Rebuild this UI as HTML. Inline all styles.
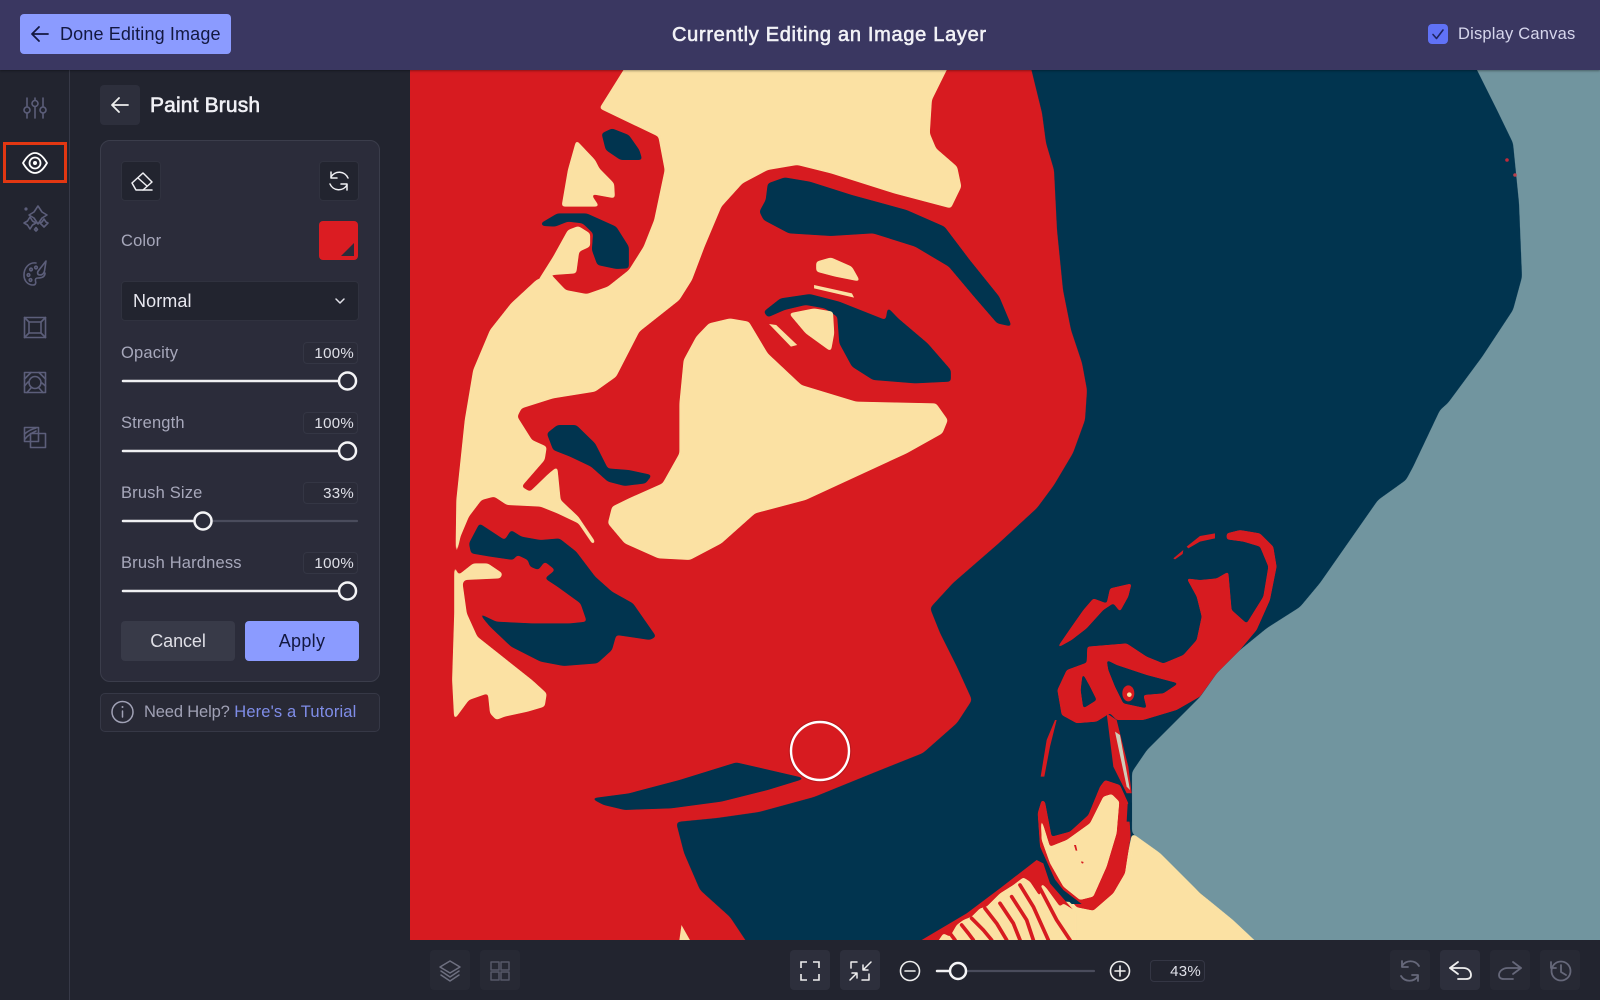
<!DOCTYPE html>
<html><head><meta charset="utf-8"><title>Paint Brush</title>
<style>
*{box-sizing:border-box;margin:0;padding:0}
html,body{width:1600px;height:1000px;overflow:hidden;background:#22242f;font-family:"Liberation Sans",sans-serif}
.a{position:absolute}
.t{position:absolute;white-space:nowrap;line-height:24px;height:24px}
.lab{font-size:16.5px;color:#a7a8bb;left:121px;letter-spacing:.17px}
.val{position:absolute;left:303px;width:55px;height:22px;border:1px solid #343644;border-radius:4px;background:#2a2b38;color:#dfe0e8;font-size:15px;line-height:21px;text-align:right;padding-right:3px;letter-spacing:.3px}
.btn{position:absolute;border-radius:4px}
#art{position:absolute;left:0;top:0;width:1600px;height:1000px}
</style></head>
<body>
<svg id="art" viewBox="0 0 1600 1000" xmlns="http://www.w3.org/2000/svg">
<defs>
<filter id="sA" x="-5%" y="-5%" width="110%" height="110%" color-interpolation-filters="sRGB"><feGaussianBlur stdDeviation="2.2"/><feComponentTransfer><feFuncA type="linear" slope="9" intercept="-4"/></feComponentTransfer></filter>
<filter id="s7" x="-10%" y="-10%" width="120%" height="120%" color-interpolation-filters="sRGB"><feGaussianBlur stdDeviation="3.8 4.8"/><feComponentTransfer><feFuncA type="linear" slope="9" intercept="-4"/></feComponentTransfer></filter>
<filter id="s9" x="-10%" y="-10%" width="120%" height="120%" color-interpolation-filters="sRGB"><feGaussianBlur stdDeviation="3.6"/><feComponentTransfer><feFuncA type="linear" slope="9" intercept="-4"/></feComponentTransfer></filter>
</defs>
<clipPath id="cv"><rect x="410" y="70" width="1190" height="870"/></clipPath>
<g clip-path="url(#cv)">
<rect x="410" y="70" width="1190" height="870" fill="#d71b20"/>
<rect x="1090" y="70" width="510" height="870" fill="#71959f"/>
<path filter="url(#sA)" fill="#01344f" d="M1029,60L1042,113L1046,143L1054,170L1057,230L1063,290L1071,330L1082,363L1087,390L1085,420L1073,453L1054,485L1037,508L999,543L953,583L930,608L940,633L957,667L972,700L957,723L923,753L873,773L814,797L759,812L717,818L676,822L684,853L700,890L730,917L752,950L1265,950L1132,833L1132,772L1147,750L1167,730L1200,697L1217,673L1240,650L1267,628L1300,607L1320,583L1378,500L1406,480L1413,467L1440,410L1448,403L1482,357L1513,310L1522,277L1519,203L1513,143L1497,110L1472,60Z"/>
<!-- neck -->
<path filter="url(#sA)" fill="#fbe1a3" d="M1132,833L1160,853L1200,893L1233,920L1265,950L1050,950L1050,900L1100,905L1123,877Z"/>
<!-- collar -->
<g transform="translate(900,840) scale(.3333)">
<path fill="#d71b20" d="M65,300L200,220L300,145L410,60L430,70L450,130L520,210L520,300Z"/>
<path filter="url(#s9)" fill="#fbe1a3" d="M110,310L130,280L150,290L170,255L190,240L215,230L240,205L260,200L300,160L340,135L370,112L390,125L420,170L425,130L440,145L480,200L490,190L530,215L530,310Z"/>
<g fill="none" stroke="#d71b20" stroke-width="11" stroke-linecap="round" stroke-linejoin="round">
<path d="M360,135L400,200L445,300"/><path d="M335,170L380,240L400,300"/><path d="M300,190L340,250L360,300"/><path d="M255,205L290,250L320,300"/><path d="M215,235L250,270L275,300"/><path d="M185,255L205,280L220,300"/><path d="M150,280L165,300"/><path d="M415,135L470,240L510,300"/>
</g>
</g>
<!-- earring / ear in z9 coords -->
<g transform="translate(1000,500) scale(.3333)">
<path filter="url(#s9)" fill="#d71b20" d="M680,100L720,90L780,100L820,140L830,200L810,300L770,390L720,450L650,520L600,590L530,630L430,660L350,660L330,640L290,665L230,670L185,645L172,570L200,510L260,488L262,440L380,430L440,470L490,490L550,465L590,420L605,350L590,290L560,235L600,240L650,235L685,215L695,330L740,370L790,290L805,200L780,140L730,125L680,118Z"/>
<path filter="url(#s9)" fill="#01344f" d="M320,480L350,495L440,525L535,550L490,580L430,585L440,625L370,610L345,560L325,510Z"/>
<path filter="url(#s9)" fill="#01344f" d="M248,520L270,560L290,600L250,625L242,570Z"/>
<ellipse cx="385" cy="580" rx="18" ry="24" fill="#d71b20"/><circle cx="388" cy="584" r="7" fill="#fbe1a3"/>
<path fill="#d71b20" d="M520,175L550,150L548,162L525,178ZM560,140L600,108L645,100L645,115L600,125L565,145Z"/>
<path filter="url(#s9)" fill="#d71b20" d="M170,445L215,380L250,330L280,295L320,310L330,265L395,250L385,290L360,335L340,310L310,330L260,385L215,420Z"/>
<path fill="#d71b20" d="M165,660L140,720L122,830L133,830L150,740L170,660Z"/>
<path filter="url(#s9)" fill="#d71b20" d="M125,900L135,905L155,1010L210,995L265,945L300,860L315,840L360,855L385,910L392,1010L375,1120L340,1180L280,1232L230,1222L170,1150L120,1040L113,940Z"/>
<path fill="#d71b20" d="M320,640L350,660L385,800L395,880L380,880L340,800Z"/>
<path fill="#cfcdb8" d="M345,695L360,705L390,870L380,860Z"/>
<path fill="#01344f" d="M383,912L396,908L396,965L380,965Z"/>
<path filter="url(#s9)" fill="#fbe1a3" d="M122,950L150,1040L200,1020L270,970L310,890L335,882L358,905L350,1000L320,1100L280,1190L240,1200L190,1160L150,1090L125,1020Z"/>
<path fill="#01344f" d="M150,1120L190,1170L245,1212L215,1212L170,1170Z"/>
<path fill="#d71b20" d="M222,1035L228,1035L232,1052L227,1052ZM244,1084L251,1086L249,1091L244,1089Z"/>
</g>
<!-- specks -->
<circle cx="1507" cy="160" r="1.8" fill="#c22a3a"/><circle cx="1515" cy="175" r="1.8" fill="#b8404c"/>
<!-- face in z7 coords -->
<g transform="translate(410,70) scale(.4209,.33333)">
<path filter="url(#s7)" fill="#fbe1a3" d="M522,-30L1287,-30L1240,90L1235,190L1250,235L1300,290L1310,350L1285,415L1150,370L1000,310L920,285L850,300L790,340L740,410L700,530L670,630L640,690L545,785L490,920L440,965L340,985L265,1015L255,1040L290,1110L325,1130L320,1170L265,1250L285,1265L330,1210L350,1190L358,1290L400,1340L440,1415L435,1425L400,1360L350,1330L310,1310L230,1305L200,1280L170,1290L140,1340L120,1400L108,1470L110,1290L130,1050L150,900L190,780L240,700L300,630L335,610L340,620L370,660L420,672L470,650L520,600L555,530L580,450L605,300L590,200L450,115Z"/>
<path filter="url(#s7)" fill="#fbe1a3" d="M395,210L440,270L450,295L485,340L487,385L430,372L450,410L360,410L375,300Z"/>
<path filter="url(#s7)" fill="#fbe1a3" d="M300,640L340,560L375,480L400,468L428,490L428,530L402,545L395,610L340,615Z"/>
<path filter="url(#s7)" fill="#01344f" d="M455,190L480,175L520,195L545,240L552,270L500,270L465,240Z"/>
<path filter="url(#s7)" fill="#01344f" d="M310,460L350,430L420,430L490,470L520,530L520,595L490,597L445,585L432,540L435,490L410,460L375,455L345,470L315,468Z"/>
<path filter="url(#s7)" fill="#01344f" d="M850,340L890,322L950,335L1050,375L1180,420L1270,470L1330,570L1400,680L1430,770L1395,760L1340,680L1280,590L1200,530L1100,490L1000,498L900,490L840,450L830,425L845,390Z"/>
<path filter="url(#s7)" fill="#fbe1a3" d="M965,575L1000,562L1050,590L1070,635L1010,620L965,605Z"/>
<path fill="#fbe1a3" d="M960,645L1050,670L1055,683L960,655Z"/>
<path filter="url(#s7)" fill="#01344f" d="M840,725L880,685L950,672L1020,695L1130,750L1135,712L1160,745L1230,820L1285,900L1285,935L1200,940L1100,930L1050,890L1020,820L1015,740L985,715L940,705L890,720L850,742Z"/>
<path filter="url(#s7)" fill="#fbe1a3" d="M900,730L960,715L1005,725L1008,790L1000,845L940,790Z"/>
<path fill="#fbe1a3" d="M853,762L870,765L920,825L905,830Z"/>
<path filter="url(#s7)" fill="#fbe1a3" d="M710,760L760,745L805,755L850,850L930,945L1060,995L1250,1000L1278,1050L1265,1090L1180,1150L940,1290L820,1330L740,1420L665,1470L590,1465L510,1420L470,1360L480,1310L520,1285L600,1240L640,1150L640,1000L650,870L680,800Z"/>
<path filter="url(#s7)" fill="#01344f" d="M325,1090L350,1065L395,1065L440,1120L470,1195L520,1200L575,1215L560,1240L510,1248L470,1235L430,1190L380,1160L340,1140Z"/>
<path filter="url(#s7)" fill="#fbe1a3" d="M115,1515L150,1480L185,1480L220,1510L215,1525L130,1530L125,1540L135,1630L160,1700L220,1760L290,1830L325,1870L320,1910L280,1925L225,1940L205,1950L190,1930L185,1870L140,1890L105,1950L100,1830L105,1630L105,1480Z"/>
<path filter="url(#s7)" fill="#01344f" d="M165,1360L225,1410L240,1380L265,1400L310,1410L355,1405L395,1445L440,1520L480,1565L530,1600L585,1700L570,1710L490,1695L480,1740L445,1780L365,1788L310,1775L240,1730L190,1670L160,1625L180,1640L205,1655L290,1660L380,1660L420,1655L405,1600L350,1550L320,1525L345,1500L320,1475L305,1500L285,1490L280,1470L255,1455L245,1470L190,1460L145,1450L140,1420Z"/>
<path filter="url(#s7)" fill="#01344f" d="M430,2185L520,2170L640,2130L775,2077L940,2125L850,2160L740,2195L620,2215L510,2220L460,2205Z"/>
<path fill="#fbe1a3" d="M640,2610L645,2565L665,2610Z"/>
</g>
<circle cx="820" cy="751" r="29" fill="none" stroke="#fff" stroke-width="2.4"/>
<circle cx="820" cy="751" r="30.800" fill="none" stroke="#000" stroke-opacity=".15" stroke-width="1"/>
</g>

<!-- sidebar divider -->
<rect x="69" y="70" width="1" height="930" fill="#373947"/>
</svg>

<!-- Header -->
<div class="a" style="left:0;top:0;width:1600px;height:70px;background:#3a3761;box-shadow:0 1px 2px rgba(0,0,0,.35)"></div>
<div class="btn" style="left:20px;top:14px;width:211px;height:40px;background:#8b9bff"></div>
<div class="t" style="left:60px;top:22px;font-size:18px;color:#131840;letter-spacing:.14px">Done Editing Image</div>
<div class="t" style="left:672px;top:23px;font-size:20px;color:#f1f1f6;letter-spacing:.7px;-webkit-text-stroke:.6px #f1f1f6">Currently Editing an Image Layer</div>
<div class="a" style="left:1428px;top:24px;width:20px;height:20px;border-radius:4px;background:#6072f6"></div>
<div class="t" style="left:1458px;top:22px;font-size:16.5px;color:#d6d6ec;letter-spacing:.2px">Display Canvas</div>

<!-- Left panel -->
<div class="btn" style="left:100px;top:85px;width:40px;height:40px;background:#2d2f3c"></div>
<div class="t" style="left:150px;top:94px;font-size:21px;color:#f0f0f5;letter-spacing:.15px;-webkit-text-stroke:.6px #f0f0f5">Paint Brush</div>
<div class="a" style="left:100px;top:140px;width:280px;height:542px;background:#2b2c3a;border:1px solid #3b3d4b;border-radius:10px"></div>
<div class="btn" style="left:121px;top:161px;width:40px;height:40px;background:#22242f;border:1px solid #30323f"></div>
<div class="btn" style="left:319px;top:161px;width:40px;height:40px;background:#22242f;border:1px solid #30323f"></div>
<div class="t lab" style="top:229px">Color</div>
<div class="btn" style="left:319px;top:221px;width:39px;height:39px;background:#db1c22"></div>
<div class="btn" style="left:121px;top:281px;width:238px;height:40px;background:#22242f;border:1px solid #30323f"></div>
<div class="t" style="left:133px;top:289px;font-size:18px;color:#e8e8f0;letter-spacing:.1px">Normal</div>

<div class="t lab" style="top:341px">Opacity</div><div class="val" style="top:342px">100%</div>
<div class="t lab" style="top:411px">Strength</div><div class="val" style="top:412px">100%</div>
<div class="t lab" style="top:481px">Brush Size</div><div class="val" style="top:482px">33%</div>
<div class="t lab" style="top:551px">Brush Hardness</div><div class="val" style="top:552px">100%</div>

<div class="btn" style="left:121px;top:621px;width:114px;height:40px;background:#383a48"></div>
<div class="t" style="left:121px;width:114px;text-align:center;top:629px;font-size:18px;color:#dfdfe6;letter-spacing:-.1px">Cancel</div>
<div class="btn" style="left:245px;top:621px;width:114px;height:40px;background:#8b9bff"></div>
<div class="t" style="left:245px;width:114px;text-align:center;top:629px;font-size:18px;color:#131840;letter-spacing:.3px">Apply</div>

<div class="a" style="left:100px;top:693px;width:280px;height:39px;background:#282935;border:1px solid #363846;border-radius:5px"></div>
<div class="t" style="left:144px;top:700px;font-size:16.5px;color:#a0a1b5"><span style="letter-spacing:-.15px">Need Help?</span> <span style="color:#7f8de8;letter-spacing:.15px">Here's a Tutorial</span></div>

<!-- bottom bar -->
<div class="a" style="left:70px;top:940px;width:1530px;height:60px;background:#22242f"></div>
<div class="btn" style="left:430px;top:950px;width:40px;height:40px;background:#272934"></div>
<div class="btn" style="left:480px;top:950px;width:40px;height:40px;background:#272934"></div>
<div class="btn" style="left:790px;top:950px;width:40px;height:40px;background:#2d2f3c"></div>
<div class="btn" style="left:840px;top:950px;width:40px;height:40px;background:#2d2f3c"></div>
<div class="val" style="left:1150px;top:960px;width:55px;height:22px;background:#22242f">43%</div>
<div class="btn" style="left:1390px;top:950px;width:40px;height:40px;background:#272934"></div>
<div class="btn" style="left:1440px;top:950px;width:40px;height:40px;background:#2d2f3c"></div>
<div class="btn" style="left:1490px;top:950px;width:40px;height:40px;background:#272934"></div>
<div class="btn" style="left:1540px;top:950px;width:40px;height:40px;background:#272934"></div>

<!-- Icon layer -->
<svg class="a" style="left:0;top:0" width="1600" height="1000" viewBox="0 0 1600 1000" fill="none" stroke-linecap="round" stroke-linejoin="round">
<!-- header icons -->
<path d="M48,34H32M39,27L32,34L39,41" stroke="#131840" stroke-width="1.800"/>
<path d="M1433,34.500L1436.500,38.500L1443,30" stroke="#1f2560" stroke-width="1.600"/>
<!-- sidebar -->
<g stroke="#5c5e7a" stroke-width="1.600">
<path d="M27,98V106M27,113V118M35,98V100M35,107V118M43,98V106M43,113V118"/>
<circle cx="27" cy="110" r="3"/><circle cx="35" cy="103.500" r="3"/><circle cx="43" cy="110" r="3"/>
<path d="M38,206L42,212L47,215L42,218L38,224L34,218L29,215L34,212Z"/>
<path d="M30,217L32.500,221L36,223L32.500,225L30,229L27.500,225L24,223L27.500,221Z"/>
<path d="M44,219L46,222L48,223L46,225L44,227L42,225L40,223L42,222Z"/>
<path d="M36,227.500L37.500,229.500L36,231L34.500,229.500Z"/><circle cx="26" cy="209" r=".8"/>
<path d="M36,263C29,262 24,268 24,275C24,281 28,285 33,285C36,285 36,282.500 35.500,281C35,279 36,278 38,278C42,278 45,277 45,273"/>
<path d="M46,261L39,270C37,272 37,275 40,275C43,275 44,273 44.500,271Z"/>
<circle cx="28.500" cy="275" r="1.300"/><circle cx="31" cy="269.500" r="1.300"/><circle cx="36" cy="267.500" r="1.300"/><circle cx="30.500" cy="280" r="1.300"/>
<rect x="24.500" y="317.500" width="21" height="20"/><rect x="29" y="322" width="12" height="11"/>
<path d="M24.500,317.500L29,322M45.500,317.500L41,322M24.500,337.500L29,333M45.500,337.500L41,333"/>
<rect x="24.500" y="372.500" width="21" height="20"/><circle cx="35" cy="382.500" r="6"/>
<path d="M24.500,379L31,372.500M24.500,386L28,382M39,372.500L45.500,379M42,383L45.500,386M27,392.500L31,388M39,388L43,392.500"/>
<rect x="24.500" y="427.500" width="14" height="14"/><rect x="30.500" y="433.500" width="15" height="14"/>
<path d="M24.500,434C28,431 32,429 36,428M25,439C28,435 32,433 36,431"/>
</g>
<!-- eye -->
<g stroke="#fff" stroke-width="1.800">
<path d="M23,163C27,156 31,153 35,153C39,153 43,156 47,163C43,170 39,173 35,173C31,173 27,170 23,163Z"/>
<circle cx="35" cy="163" r="5.500"/><circle cx="35" cy="163" r="2" fill="#fff" stroke="none"/>
</g>
<rect x="4.500" y="143.500" width="61" height="38" stroke="#e23712" stroke-width="3" stroke-linejoin="miter"/>
<!-- panel back -->
<path d="M128,105H112M119,98L112,105L119,112" stroke="#eee" stroke-width="1.800"/>
<!-- eraser -->
<g stroke="#f0f0f4" stroke-width="1.500">
<path d="M132,183L143,173L152,182L143,190H136Z"/><path d="M138,178L147,186"/><path d="M143,190H152"/>
</g>
<!-- reset -->
<g stroke="#f0f0f4" stroke-width="1.500">
<path d="M331,177A9.500,9.500 0 0 1 348,178M347,185A9.500,9.500 0 0 1 330,184"/>
<path d="M331,172V178H337M347,190V184H341"/>
</g>
<!-- swatch triangle -->
<path d="M354,243V256H341Z" fill="#2b2c3a"/>
<!-- chevron -->
<path d="M336,299L340,303L344,299" stroke="#e0e0e8" stroke-width="1.500"/>
<!-- sliders -->
<g stroke-width="2.500">
<path d="M123,381H347M123,451H347M123,591H347" stroke="#f0f0f2"/>
<path d="M203,521H357" stroke="#4a4c5c" stroke-width="2.200"/><path d="M123,521H203" stroke="#f0f0f2"/>
<g fill="#2b2c3a" stroke="#f4f4f6">
<circle cx="347.500" cy="381" r="8.500"/><circle cx="347.500" cy="451" r="8.500"/><circle cx="203" cy="521" r="8.500"/><circle cx="347.500" cy="591" r="8.500"/>
</g></g>
<!-- info -->
<circle cx="122.500" cy="712" r="10.500" stroke="#a0a1b5" stroke-width="1.500"/>
<path d="M122.500,711V717" stroke="#a0a1b5" stroke-width="1.500"/><circle cx="122.500" cy="707" r="1" fill="#a0a1b5"/>
<!-- layers -->
<g stroke="#6e7080" stroke-width="1.500">
<path d="M450,961L460,967L450,973L440,967Z"/><path d="M441,971L450,977L459,971"/><path d="M441,975L450,981L459,975"/>
</g>
<!-- grid -->
<g stroke="#565868" stroke-width="1.500">
<rect x="491" y="962" width="8" height="8"/><rect x="501" y="962" width="8" height="8"/><rect x="491" y="972" width="8" height="8"/><rect x="501" y="972" width="8" height="8"/>
</g>
<!-- fullscreen -->
<path d="M801,968V962H807M813,962H819V968M819,974V980H813M807,980H801V974" stroke="#eee" stroke-width="1.600" stroke-linecap="butt" stroke-linejoin="miter"/>
<!-- collapse -->
<g stroke="#eee" stroke-width="1.500">
<path d="M851,968V962H857M869,980H862M869,980V974"/>
<path d="M871,962L863,970M863,965V970H868"/><path d="M850,980L857,973M852,973H857V978"/>
</g>
<!-- zoom -->
<circle cx="910" cy="971" r="9.500" stroke="#eee" stroke-width="1.600"/><path d="M905,971H915" stroke="#eee" stroke-width="1.600"/>
<path d="M958,971H1094" stroke="#4a4c5c" stroke-width="2.200"/><path d="M937,971H958" stroke="#f0f0f2" stroke-width="2.500"/>
<circle cx="958" cy="971" r="8" fill="#22242f" stroke="#f4f4f6" stroke-width="2.500"/>
<circle cx="1120" cy="971" r="9.500" stroke="#eee" stroke-width="1.600"/><path d="M1115,971H1125M1120,966V976" stroke="#eee" stroke-width="1.600"/>
<!-- right bottom -->
<g stroke="#66687a" stroke-width="1.800">
<path d="M1402,966A10,10 0 0 1 1419,966M1418,976A10,10 0 0 1 1401,976"/>
<path d="M1402,961V967H1408M1418,981V975H1412"/>
<path d="M1521,968H1508C1502,968 1499,972 1499,975C1499,978 1501,979 1504,979H1513"/><path d="M1513,962L1521,968L1513,974"/>
<circle cx="1561" cy="971" r="9.500"/><path d="M1561,965V972L1566,975"/><path d="M1551,962V968H1556"/>
</g>
<g stroke="#eee" stroke-width="1.800">
<path d="M1450,968H1463C1469,968 1471,972 1471,975C1471,978 1469,979 1466,979H1458"/><path d="M1458,962L1450,968L1458,974"/>
</g>
</svg>
</body></html>
